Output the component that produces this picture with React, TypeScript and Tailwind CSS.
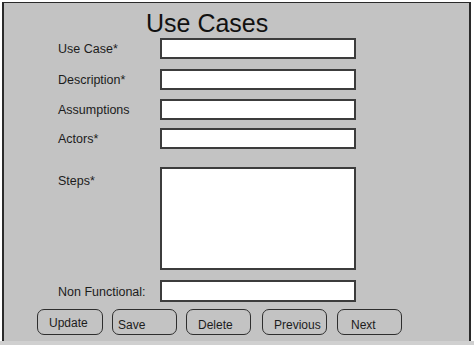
import React from "react";

const font = { fontFamily: '"Liberation Sans", Arial, sans-serif' };

function Row({ label, mt, h, top }: { label: string; mt: string; h: string; top?: boolean }) {
  return (
    <div className={`flex ${top ? "items-start" : "items-center"} pl-[54px] ${mt}`}>
      <div className={`w-[102px] text-[12.5px] leading-[15px] text-[#1c1c1c] ${top ? "mt-[7px]" : "mt-[2px]"}`}>{label}</div>
      <div className={`w-[196px] ${h} bg-white border-2 border-[#3c3c3c]`} />
    </div>
  );
}

function Btn({ label, w, ml, pl, pt }: { label: string; w: string; ml: string; pl: string; pt: string }) {
  return (
    <div className={`${w} ${ml} h-[26px] rounded-[7px] border-[1.5px] border-[#2e2e2e] text-[12px] leading-[15px] text-[#1c1c1c] ${pl} ${pt}`}>
      {label}
    </div>
  );
}

export default function App() {
  return (
    <div className="w-[474px] h-[345px] bg-white overflow-hidden" style={font}>
      <div className="ml-[2px] mt-[2px] w-[469px] h-[339px] bg-[#c3c3c3] border-l-2 border-t border-r-2 border-[#2a2a2a] flex flex-col">
        <div className="mt-[6px] pl-[142px] text-[25px] leading-[28px] text-[#111]">Use Cases</div>
        <Row label="Use Case*" mt="mt-[1px]" h="h-[21px]" />
        <Row label="Description*" mt="mt-[10px]" h="h-[21px]" />
        <Row label="Assumptions" mt="mt-[9px]" h="h-[21px]" />
        <Row label="Actors*" mt="mt-[8px]" h="h-[21px]" />
        <Row label="Steps*" mt="mt-[18px]" h="h-[103px]" top />
        <Row label="Non Functional:" mt="mt-[10px]" h="h-[22px]" />
        <div className="flex mt-[7px] pl-[33px]">
          <Btn label="Update" w="w-[66px]" ml="ml-0" pl="pl-[11px]" pt="pt-[6px]" />
          <Btn label="Save" w="w-[65px]" ml="ml-[9px]" pl="pl-[5px]" pt="pt-[8px]" />
          <Btn label="Delete" w="w-[65px]" ml="ml-[9px]" pl="pl-[11px]" pt="pt-[8px]" />
          <Btn label="Previous" w="w-[65px]" ml="ml-[11px]" pl="pl-[11px]" pt="pt-[8px]" />
          <Btn label="Next" w="w-[65px]" ml="ml-[10px]" pl="pl-[13px]" pt="pt-[8px]" />
        </div>
      </div>
      <div className="h-[4px] bg-[#d0d0d0]" />
    </div>
  );
}
